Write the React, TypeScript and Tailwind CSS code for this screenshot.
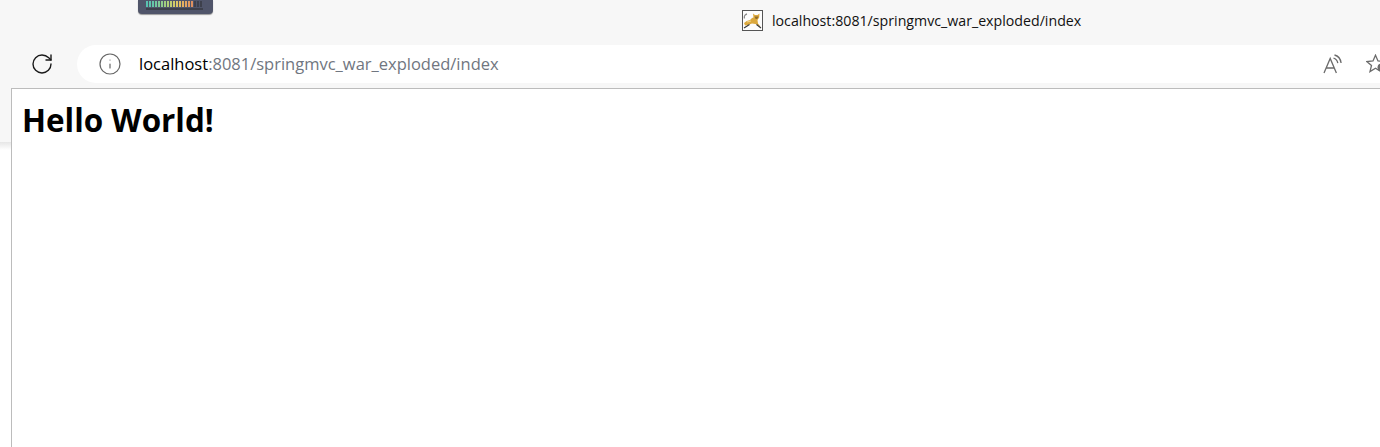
import { RotateCw, Info } from "lucide-react";

const meterColors = [
  "#58c0b0", "#5cc4ac", "#64c6a8", "#70c8a0", "#80ca98", "#90cc8c", "#a0ce80", "#b0ce78",
  "#c0ce70", "#d0cc68", "#dcc664", "#e2bc60", "#e4b060", "#e4a460", "#e29a60", "#de9060",
];

function TomcatIcon() {
  return (
    <svg width="21" height="21" viewBox="0 0 21 21" className="shrink-0">
      <rect x="0.5" y="0.5" width="20" height="20" fill="#fdfdfd" stroke="#555" />
      <path d="M2.5 8.5c-.8-2.5.6-4 2.5-4.5" fill="none" stroke="#8a8a8a" strokeWidth="1.3" />
      <path d="M2 13c1.8-1.6 3.6-2.6 6-3l2-2 1.5-.5L11 3.5l2 1.5 2.5 0 2-1.5-.3 4-1.7 2.5.5 3.5 2.5 3-5-2.5-3.5-.5-4 1.5-3 .5z" fill="#dca93e" />
      <path d="M12.5 6.5l4 0-1.2 2.5-1.6 0z" fill="#8f6c2c" />
      <path d="M2 18l5.5-3.5M14.5 14.5l4.5 3.5" stroke="#3a3a3a" strokeWidth="1.2" />
      <path d="M5 12l4-1" stroke="#f2d68c" strokeWidth="1" />
    </svg>
  );
}

function ReadAloudIcon() {
  return (
    <svg width="20" height="20" viewBox="0 0 20 20" fill="none" stroke="#6b6b6b" strokeWidth="1.3" className="shrink-0">
      <path d="M1 19 7.2 4.5 13.4 19M3.3 14h8" />
      <path d="M10.5 4.2c2.2 .6 3.8 2.4 4.3 5M11.5 1c3.6 .8 6 3.8 6.6 8" />
    </svg>
  );
}

function FavoriteIcon() {
  return (
    <svg width="20" height="20" viewBox="0 0 20 20" className="shrink-0">
      <path d="M9.5 1.2l2.5 5.8 6.2.5-4.7 4 1.5 6.1-5.5-3.3-5.5 3.3 1.5-6.1-4.7-4L7 7z" fill="none" stroke="#6b6b6b" strokeWidth="1.3" />
      <circle cx="15.5" cy="13.5" r="4" fill="#6b6b6b" />
    </svg>
  );
}

export default function App() {
  return (
    <div className="flex h-[447px] w-[1380px] flex-col overflow-hidden bg-white font-['Open_Sans','Noto_Sans',sans-serif] text-black">
      {/* title strip */}
      <div className="flex h-[45px] items-start bg-[#f7f7f7]">
        <div className="ml-[138px] flex h-[14px] w-[75px] flex-col gap-px rounded-b-[4px] bg-[#50556a] pl-[8px] pt-[1px] shadow-[0_1px_1px_#9a9a9a]">
          <div className="flex gap-px">
            {meterColors.map((c) => (
              <span key={c} className="h-[6px] w-[2px]" style={{ backgroundColor: c }} />
            ))}
            {[0, 1, 2].map((i) => (
              <span key={i} className="h-[6px] w-[2px] bg-[#3d404c]" />
            ))}
          </div>
          <div className="h-[2px] w-[57px] bg-[#3d404c]" />
        </div>
        <div className="ml-[529px] mt-[10px] flex items-center gap-[9px]">
          <TomcatIcon />
          <span className="text-[14.2px] leading-[20px] whitespace-nowrap text-[#111]">localhost:8081/springmvc_war_exploded/index</span>
        </div>
      </div>

      {/* address bar row */}
      <div className="flex h-[43px] items-start bg-[#f7f7f7]">
        <div className="flex h-[38px] w-[77px] items-center justify-center pl-[6px]">
          <RotateCw size={24} strokeWidth={1.4} className="text-[#1a1a1a]" />
        </div>
        <div className="flex h-[38px] flex-1 items-center rounded-l-[19px] bg-white pl-[21px]">
          <Info size={24} strokeWidth={1.2} className="shrink-0 text-[#666]" />
          <div className="ml-[17px] text-[16.5px] leading-[24px] whitespace-nowrap text-[#707680]">
            <span className="text-black">localhost</span>:8081/springmvc_war_exploded/index
          </div>
          <div className="ml-auto flex items-center gap-[23px]">
            <ReadAloudIcon />
            <div className="w-[14px] overflow-hidden">
              <FavoriteIcon />
            </div>
          </div>
        </div>
      </div>

      {/* page */}
      <div className="flex flex-1">
        <div className="w-[11px] shrink-0">
          <div className="h-[54px] bg-[#f7f7f7]" />
          <div className="h-[8px] bg-gradient-to-b from-[#e6e6e6] to-white" />
        </div>
        <div className="flex-1 border-t border-l border-[#bcbcbc] bg-white pl-[10px]">
          <h1 className="mt-[11px] text-[31.4px] leading-[40px] font-bold">Hello World!</h1>
        </div>
      </div>
    </div>
  );
}
